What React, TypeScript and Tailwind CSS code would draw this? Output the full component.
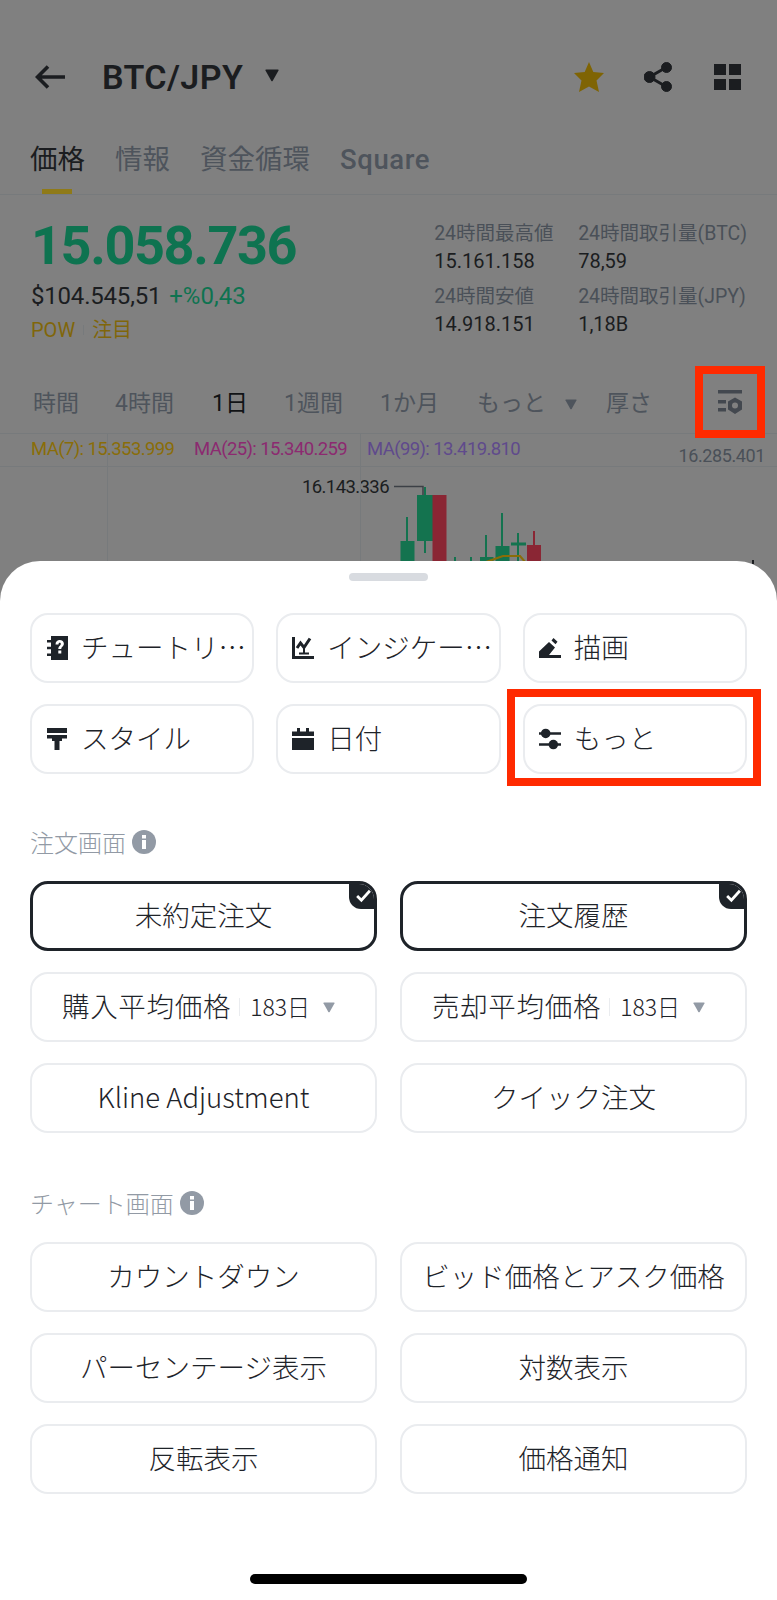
import React from 'react'

function Caret({ className }: { className: string }) {
  return (
    <svg viewBox="0 0 12 10" className={className} fill="currentColor">
      <path d="M1 1.2 Q0.6 0.4 1.6 0.4 H10.4 Q11.4 0.4 11 1.2 L6.6 9 Q6 9.8 5.4 9 Z" />
    </svg>
  )
}

function InfoDot() {
  return (
    <svg viewBox="0 0 24 24" className="w-6 h-6">
      <circle cx="12" cy="12" r="12" fill="#929aa5" />
      <rect x="10" y="10" width="4" height="9" fill="#fff" />
      <rect x="10" y="5" width="4" height="3.5" fill="#fff" />
    </svg>
  )
}

function NoteIcon() {
  return (
    <svg viewBox="0 0 22 24" className="w-[22px] h-[24px] text-[#1e2329]" fill="currentColor">
      <path d="M5 0h17v24H5z" />
      <path d="M1 4h6v2.5H1zM1 10.7h6v2.5H1zM1 17.4h6v2.5H1z" />
      <path d="M9.5 8.5c0-3 1.8-4.5 4.2-4.5s4.2 1.4 4.2 3.8c0 2.5-2.6 3-2.6 5.2h-3c0-3.2 2.5-3.4 2.5-5.1 0-.8-.4-1.2-1.1-1.2-.8 0-1.2.6-1.2 1.8zM12.3 14.6h3v3h-3z" fill="#fff" />
    </svg>
  )
}

function BrushIcon() {
  return (
    <svg viewBox="0 0 22 22" className="w-[22px] h-[22px] text-[#1e2329]" fill="currentColor">
      <path d="M1 0h20v5H1zM1 7h20v3.5l-5 .1v2.5h-2.5V22h-5v-8.900H6v-2.500l-5-.100z" />
    </svg>
  )
}

function IndicatorIcon() {
  return (
    <svg viewBox="0 0 22 22" className="w-[22px] h-[22px] text-[#1e2329]" fill="none" stroke="currentColor">
      <path d="M1.500 0v20.500H22" strokeWidth="3" />
      <path d="M5 11l3.500-5 3.500 4.500L18 1.500" strokeWidth="3" />
      <path d="M7 16.500h10M12 10v6" strokeWidth="2" />
    </svg>
  )
}

function PenIcon() {
  return (
    <svg viewBox="0 0 22 20" className="w-[22px] h-[20px] text-[#1e2329]" fill="currentColor">
      <path d="M0 20v-6.500L10 4l6 5.500-6 7.500h12v3z" />
      <path d="M14.500 0l4 3.700-2 2.500-4-3.700z" />
    </svg>
  )
}

function CalendarIcon() {
  return (
    <svg viewBox="0 0 22 22" className="w-[22px] h-[22px] text-[#1e2329]" fill="currentColor">
      <path d="M5 0h3v3.500h6V0h3v3.500h5V8H0V3.500h5z" />
      <path d="M0 10h22v12H0z" />
    </svg>
  )
}

function SlidersIcon() {
  return (
    <svg viewBox="0 0 23 22" className="w-[23px] h-[22px] text-[#1e2329]" fill="currentColor">
      <path d="M0 4h23v2.500H0zM0 15.500h23V18H0z" />
      <circle cx="7" cy="5.200" r="5" />
      <circle cx="15" cy="16.800" r="5" />
    </svg>
  )
}

const tools = [
  { icon: <NoteIcon />, label: 'チュートリ…' },
  { icon: <IndicatorIcon />, label: 'インジケー…' },
  { icon: <PenIcon />, label: '描画' },
  { icon: <BrushIcon />, label: 'スタイル' },
  { icon: <CalendarIcon />, label: '日付' },
  { icon: <SlidersIcon />, label: 'もっと' },
]

function OptionButton({ label, checked, days }: { label: string; checked?: boolean; days?: boolean }) {
  if (days) {
    return (
      <div className="h-[70px] rounded-[18px] border-2 border-[#eaecef] flex items-center justify-center pr-[9px]">
        <span className="whitespace-nowrap -mt-[2px] tracking-[0.7px]">{label}</span>
        <span className="w-px h-[18px] bg-[#eaecef] ml-2 mr-[10px]" />
        <span className="text-[23px] whitespace-nowrap -mt-[2px]">183日</span>
        <Caret className="w-[14px] h-[11px] ml-3 text-[#929aa5]" />
      </div>
    )
  }
  return (
    <div
      className={
        checked
          ? 'relative h-[70px] rounded-[18px] border-[3px] border-[#1e2329] flex items-center justify-center overflow-hidden'
          : 'h-[70px] rounded-[18px] border-2 border-[#eaecef] flex items-center justify-center'
      }
    >
      <span className="whitespace-nowrap -mt-[2px]">{label}</span>
      {checked && (
        <div className="absolute -top-[3px] -right-[3px] w-[28px] h-[28px] bg-[#1e2329] rounded-bl-[12px] flex items-center justify-center">
          <svg viewBox="0 0 16 16" className="w-[17px] h-[17px]" fill="none" stroke="#fff" strokeWidth="2.600">
            <path d="M2 8.500l4 4 8-9" />
          </svg>
        </div>
      )}
    </div>
  )
}

function Stat({ label, value }: { label: string; value: string }) {
  return (
    <div>
      <div className="text-[19.500px] leading-[24px] text-[#4a5058] whitespace-nowrap">{label}</div>
      <div className="text-[20px] leading-[24px] mt-[3px] text-[#1b1d20]">{value}</div>
    </div>
  )
}

// Candles behind the sheet, coordinates are page x / y minus the chart's origin (y 465)
function Chart() {
  const green = '#14734f'
  const red = '#8a2634'
  return (
    <svg viewBox="0 0 777 135" className="w-[777px] h-[135px] block">
      <text x="302" y="26" fontSize="18.500" fill="#1b1d20" letterSpacing="-0.600">16.143.336</text>
      <path d="M394 19.500H423V28" fill="none" stroke="#3c4046" strokeWidth="1.500" />
      <g stroke={green} strokeWidth="2">
        <path d="M407 50V100M425 20V86M455 90V100M471 90V100M486 68V100M502 46V100M518 66V100" />
        <path d="M511 77H526" strokeWidth="3" />
      </g>
      <rect x="400.500" y="74" width="14" height="30" fill={green} />
      <rect x="417" y="28" width="16" height="46" fill={green} />
      <rect x="432.500" y="28" width="14" height="70" fill={red} />
      <rect x="480" y="90" width="13.500" height="12" fill={green} />
      <rect x="495.500" y="79" width="14" height="22" fill={green} />
      <path d="M534 64V80" stroke={red} strokeWidth="2" />
      <rect x="527" y="78" width="14" height="22" fill={red} />
      <path d="M483 96L503 89H520L526 96" fill="none" stroke="#8a6d08" strokeWidth="2" />
      <path d="M753 93v4" stroke="#1b1d20" strokeWidth="2" />
    </svg>
  )
}

export default function App() {
  return (
    <div lang="ja" className="relative w-[777px] h-[1600px] overflow-hidden bg-[#808080] font-['Roboto','Noto_Sans_CJK_JP',sans-serif] text-[#1b1d20]">
      {/* Header */}
      <div className="flex items-center h-[34px] mt-[60px] pl-[35px] pr-[36px]">
        <svg viewBox="0 0 30 24" className="w-[30px] h-[24px]" fill="none" stroke="#1b1d20" strokeWidth="3.600">
          <path d="M30 12H3M13 1.500L2.500 12 13 22.500" />
        </svg>
        <span className="text-[34px] leading-none font-semibold ml-[37px] tracking-[0.4px]">BTC/JPY</span>
        <Caret className="w-[16px] h-[13px] ml-[21px] -mt-1 text-[#1b1d20]" />
        <svg viewBox="0 0 30 30" className="w-[30px] h-[30px] ml-auto" fill="#7f6404">
          <path d="M15 0l4.300 10 10.700 1-7.500 7.400L25 30l-10-5.500L5 30l2.500-11.600L0 11l10.700-1z" />
        </svg>
        <svg viewBox="0 0 28 30" className="w-[28px] h-[30px] ml-[40px]" fill="#1b1d20" stroke="#1b1d20">
          <circle cx="22.500" cy="5.500" r="5" />
          <circle cx="22.500" cy="24.500" r="5" />
          <circle cx="5.500" cy="15" r="5.500" />
          <path d="M22 5.500L5.500 15 22 24.500" fill="none" strokeWidth="3" />
        </svg>
        <svg viewBox="0 0 27 26" className="w-[27px] h-[26px] ml-[42px]" fill="#1b1d20">
          <path d="M0 0h12v11H0zM15 0h12v11H15zM0 15h12v11H0zM15 15h12v11H15z" />
        </svg>
      </div>

      {/* Tabs */}
      <div className="relative h-[101px] border-b border-[#777a7c]">
        <div className="flex items-center gap-[30px] pl-[30px] pt-[50px] text-[27.500px] leading-[32px] text-[#4e545c]">
          <span className="text-[#1b1d20]">価格</span>
          <span>情報</span>
          <span>資金循環</span>
          <span className="font-medium tracking-[0.6px]">Square</span>
        </div>
        <div className="absolute left-[42px] bottom-0 w-[30px] h-[5px] bg-[#8f7a18]" />
      </div>

      {/* Price and 24h stats */}
      <div className="flex justify-between pl-[31px] pr-[30px] pt-[24px] h-[189px]">
        <div>
          <div className="text-[54px] leading-[54px] font-bold text-[#0e7350] tracking-[-1.4px]">15.058.736</div>
          <div className="flex items-center gap-[8px] mt-[9px] text-[24px] leading-[28px]">
            <span className="tracking-[-0.2px]">$104.545,51</span>
            <span className="text-[#0e7350]">+%0,43</span>
          </div>
          <div className="flex items-center mt-[6px] text-[20px] leading-[28px] text-[#80660a]">
            <span>POW</span>
            <span className="w-px h-[10px] bg-[#777a7c] mx-[8px]" />
            <span>注目</span>
          </div>
        </div>
        <div className="grid grid-cols-[144px_auto] gap-y-[12px] content-start mt-[3px]">
          <Stat label="24時間最高値" value="15.161.158" />
          <Stat label="24時間取引量(BTC)" value="78,59" />
          <Stat label="24時間安値" value="14.918.151" />
          <Stat label="24時間取引量(JPY)" value="1,18B" />
        </div>
      </div>

      {/* Timeframes */}
      <div className="flex items-center h-[50px] pb-[8px] pl-[33px] text-[23px] text-[#4e545c] border-b border-[#777a7c]">
        <span className="w-[82px]">時間</span>
        <span className="w-[97px]">4時間</span>
        <span className="w-[72px] text-[#111315]">1日</span>
        <span className="w-[96px]">1週間</span>
        <span className="w-[97px]">1か月</span>
        <span className="w-[87px]">もっと</span>
        <Caret className="w-[14px] h-[11px] text-[#4e545c]" />
        <span className="ml-[28px]">厚さ</span>
      </div>

      {/* Chart area */}
      <div className="relative">
        <div className="absolute left-[107px] top-0 bottom-0 w-px bg-[#777a7c]" />
        <div className="absolute left-[360px] top-0 bottom-0 w-px bg-[#777a7c]" />
        <div className="relative flex h-[33px] items-center pl-[31px] text-[18.500px] tracking-[-0.6px] border-b border-[#777a7c] whitespace-nowrap">
          <span className="w-[163px] text-[#8a6d08]">MA(7): 15.353.999</span>
          <span className="w-[173px] text-[#8c2a70]">MA(25): 15.340.259</span>
          <span className="text-[#5f4a8c]">MA(99): 13.419.810</span>
          <span className="absolute right-[12px] top-[12px] text-[18px] leading-[20px] text-[#4a5058] tracking-[-0.4px]">16.285.401</span>
        </div>
        <Chart />
      </div>

      {/* Highlight around the settings icon */}
      <div className="absolute left-[695px] top-[366px] w-[70px] h-[72px] border-[8px] border-[#ff2a00] flex items-center justify-center">
        <svg viewBox="0 0 24 24" className="w-6 h-6" fill="#43484f">
          <path d="M0 0h24v3.500H0zM0 10h8v3.500H0zM0 18h8v3.500H0z" />
          <path fillRule="evenodd" d="M17 7.500l7 4v8l-7 4.500-7-4.500v-8zM17 12.500a3 3 0 1 0 0 6 3 3 0 0 0 0-6z" />
        </svg>
      </div>

      {/* Bottom sheet */}
      <div className="absolute left-0 right-0 top-[561px] bottom-0 bg-white rounded-t-[40px] px-[30px] text-[#1e2329] text-[27.500px] font-light font-['Noto_Sans_CJK_JP',sans-serif]">
        <div className="w-[79px] h-[8px] rounded-full bg-[#d8dbe0] mx-auto mt-[12px]" />

        <div className="grid grid-cols-3 gap-x-[22px] gap-y-[21px] mt-[32px]">
          {tools.map(tool => (
            <div key={tool.label} className="h-[70px] rounded-[18px] border-2 border-[#eaecef] flex items-center pl-[14px] whitespace-nowrap overflow-hidden">
              <span className="w-[22px] flex justify-center shrink-0">{tool.icon}</span>
              <span className="ml-[13px] -mt-[2px]">{tool.label}</span>
            </div>
          ))}
        </div>

        <div className="flex items-center gap-[6px] mt-[56px] h-[24px] text-[24px] text-[#929aa5]">
          <span>注文画面</span>
          <InfoDot />
        </div>
        <div className="grid grid-cols-2 gap-x-[23px] gap-y-[21px] mt-[27px]">
          <OptionButton label="未約定注文" checked />
          <OptionButton label="注文履歴" checked />
          <OptionButton label="購入平均価格" days />
          <OptionButton label="売却平均価格" days />
          <OptionButton label="Kline Adjustment" />
          <OptionButton label="クイック注文" />
        </div>

        <div className="flex items-center gap-[6px] mt-[58px] h-[24px] text-[24px] text-[#929aa5]">
          <span>チャート画面</span>
          <InfoDot />
        </div>
        <div className="grid grid-cols-2 gap-x-[23px] gap-y-[21px] mt-[27px]">
          <OptionButton label="カウントダウン" />
          <OptionButton label="ビッド価格とアスク価格" />
          <OptionButton label="パーセンテージ表示" />
          <OptionButton label="対数表示" />
          <OptionButton label="反転表示" />
          <OptionButton label="価格通知" />
        </div>

        {/* Home indicator */}
        <div className="absolute left-[250px] bottom-[16px] w-[277px] h-[10px] rounded-full bg-black" />
      </div>

      {/* Highlight around the more button */}
      <div className="absolute left-[507px] top-[689px] w-[254px] h-[97px] border-[8px] border-[#ff2a00]" />
    </div>
  )
}
